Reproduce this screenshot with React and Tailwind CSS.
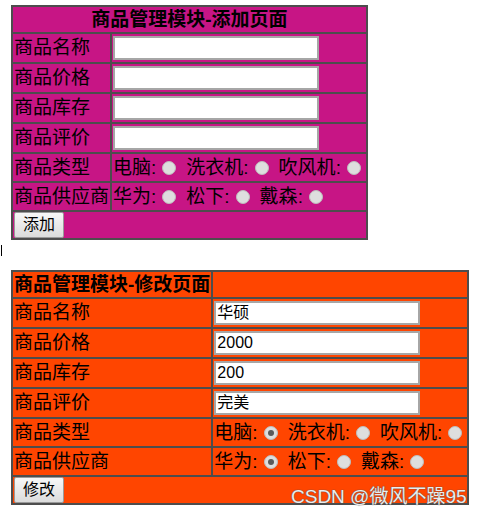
import React from 'react';

const cell = 'border-2 border-[#4d4d4d] p-0 px-[1px]';

function Radio({ checked, last }) {
  return (
    <span className={`ml-[6px] ${last ? 'mr-[4px]' : 'mr-[10px]'} inline-flex h-[14px] w-[14px] items-center justify-center rounded-full border border-[#bdbdbd] bg-[#dedede] align-[-1px]`}>
      {checked && <span className="h-[6px] w-[6px] rounded-full bg-[#5a5a5a]" />}
    </span>
  );
}

function Field({ value }) {
  return (
    <input
      readOnly
      value={value}
      className="block h-[24px] w-[206px] border-2 border-[#a6a6a6] bg-white px-[1px] text-[16px] text-black outline-none"
    />
  );
}

function Options({ items, checked }) {
  return (
    <div className="flex items-center whitespace-nowrap">
      {items.map((it, i) => (
        <React.Fragment key={it}>
          <span>{it}:</span>
          <Radio checked={checked && i === 0} last={i === items.length - 1} />
        </React.Fragment>
      ))}
    </div>
  );
}

function GoodsTable({ title, bg, button, values, checked, titleSpan, col1 }) {
  const rows = [
    ['商品名称', values[0]],
    ['商品价格', values[1]],
    ['商品库存', values[2]],
    ['商品评价', values[3]],
  ];
  return (
    <table className={`border-collapse border-2 border-[#4d4d4d] ${bg}`}>
      <tbody>
        <tr>
          {titleSpan ? (
            <td colSpan={2} className={`${cell} h-[27px] text-center font-bold`}>{title}</td>
          ) : (
            <>
              <td className={`${cell} h-[27px] font-bold whitespace-nowrap`}>{title}</td>
              <td className={cell}></td>
            </>
          )}
        </tr>
        {rows.map(([label, v]) => (
          <tr key={label}>
            <td className={`${cell} h-[30px] whitespace-nowrap ${col1}`}>{label}</td>
            <td className={`${cell} w-[255px]`}><Field value={v} /></td>
          </tr>
        ))}
        <tr>
          <td className={`${cell} h-[29px] whitespace-nowrap`}>商品类型</td>
          <td className={cell}><Options items={['电脑', '洗衣机', '吹风机']} checked={checked} /></td>
        </tr>
        <tr>
          <td className={`${cell} h-[29px] whitespace-nowrap`}>商品供应商</td>
          <td className={cell}><Options items={['华为', '松下', '戴森']} checked={checked} /></td>
        </tr>
        <tr>
          <td colSpan={2} className={`${cell} h-[26px]`}>
            <button className="block h-[26px] w-[50px] rounded-[2px] border border-[#9a9a9a] bg-gradient-to-b from-[#f7f7f7] to-[#dcdcdc] text-[16px] leading-none text-black">
              {button}
            </button>
          </td>
        </tr>
      </tbody>
    </table>
  );
}

export default function App() {
  return (
    <div className="relative h-[520px] w-[483px] overflow-hidden bg-white pt-[5px] pl-[11px] text-[19px] leading-[24px] text-black [font-family:'Liberation_Sans','Noto_Sans_CJK_SC',sans-serif]">
      <GoodsTable
        title="商品管理模块-添加页面"
        bg="bg-[#c71585]"
        button="添加"
        values={['', '', '', '']}
        titleSpan
        col1="w-[99px]"
      />
      <div className="ml-[-10px] mt-[5px] h-[11px] w-[1px] bg-black" />
      <div className="mt-[14px]">
        <GoodsTable
          title="商品管理模块-修改页面"
          bg="bg-[#ff4500]"
          button="修改"
          values={['华硕', '2000', '200', '完美']}
          checked
          col1=""
        />
      </div>
      <div className="absolute left-[291px] top-[485px] text-[19px] text-[#ececec] [text-shadow:0_0_1px_#555,0_0_1px_#555]">
        CSDN @微风不躁95
      </div>
    </div>
  );
}
